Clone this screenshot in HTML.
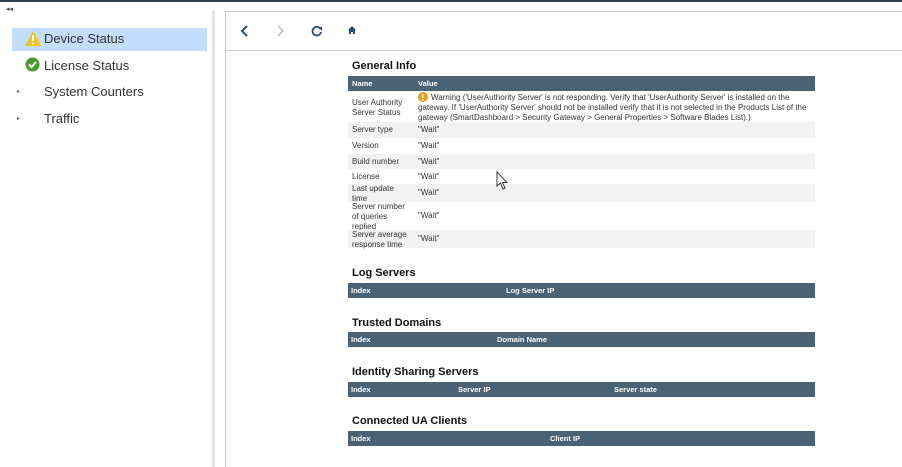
<!DOCTYPE html>
<html><head><style>
*{margin:0;padding:0;box-sizing:border-box}
body{width:902px;height:467px;overflow:hidden;background:#fff;font-family:"Liberation Sans",sans-serif;position:relative}
.a{position:absolute}
.nav{font-size:13px;color:#333}
.h{font-weight:bold;font-size:11px;color:#111}
.bar{background:#4a6274;color:#fff;font-size:7.5px;font-weight:bold;height:15px;left:348px;width:467px;line-height:15px}
.bar span{position:absolute}
.r{left:348px;width:467px;font-size:8px;color:#333}
.g{background:#f2f2f2}
.r .n{position:absolute;left:4px;line-height:10px}
.r .v{position:absolute;left:70px;line-height:10px}
</style></head><body>
<div class="a" style="left:0;top:0;width:902px;height:2px;background:#2c3e50"></div>
<div class="a" style="left:6px;top:5px;font-size:7px;color:#445">◂◂</div>
<div class="a" style="left:212px;top:10px;width:3px;height:457px;background:#e3e3e3"></div>
<div class="a" style="left:12px;top:28px;width:195px;height:23px;background:#c3defb"></div>
<svg class="a" style="left:24px;top:30px" width="18" height="17"><path d="M9 1L17 16H1Z" fill="#f5c21a"/><rect x="8" y="5" width="2" height="6" fill="#fff"/><rect x="8" y="12.5" width="2" height="2" fill="#fff"/></svg>
<div class="a nav" style="left:44px;top:31px">Device Status</div>
<svg class="a" style="left:25px;top:57px" width="15" height="15"><circle cx="7.5" cy="7.5" r="7" fill="#4a9a2e"/><path d="M4 7.5L6.5 10L11 5" stroke="#fff" stroke-width="2" fill="none"/></svg>
<div class="a nav" style="left:44px;top:58px">License Status</div>
<div class="a" style="left:17px;top:88px;font-size:6px;color:#555">▸</div>
<div class="a nav" style="left:44px;top:84px">System Counters</div>
<div class="a" style="left:17px;top:115px;font-size:6px;color:#555">▸</div>
<div class="a nav" style="left:44px;top:111px">Traffic</div>
<div class="a" style="left:225px;top:11px;width:680px;height:40px;border:1px solid #ccc;border-right:none"></div>
<div class="a" style="left:225px;top:11px;width:1px;height:456px;background:#ccc"></div>
<svg class="a" style="left:240px;top:25px" width="10" height="12"><path d="M7 1L2 6L7 11" stroke="#2d4e70" stroke-width="2" fill="none"/></svg>
<svg class="a" style="left:275px;top:25px" width="10" height="12"><path d="M3 1L8 6L3 11" stroke="#bbb" stroke-width="1.5" fill="none"/></svg>
<svg class="a" style="left:311px;top:25px" width="12" height="12"><path d="M9.5 4A4.3 4.3 0 1 0 10 7" stroke="#2d4e70" stroke-width="1.8" fill="none"/><path d="M7 2L11 2L11 6Z" fill="#2d4e70"/></svg>
<svg class="a" style="left:347px;top:25px" width="10" height="10"><path d="M5 1L9 5H8V9H6V7H4V9H2V5H1Z" fill="#2d4e70"/></svg>

<div class="a h" style="left:352px;top:60px">General Info</div>
<div class="a bar" style="top:76px"><span style="left:4px">Name</span><span style="left:70px">Value</span></div>
<div class="a r" style="top:91px;height:31px"><div class="n" style="top:7px">User Authority<br>Server Status</div>
<svg class="a" style="left:70px;top:1px" width="10" height="10"><circle cx="5" cy="5" r="5" fill="#f29b1b"/><rect x="4.2" y="2" width="1.6" height="4" fill="#fff"/><rect x="4.2" y="7" width="1.6" height="1.5" fill="#fff"/></svg>
<div class="v" style="top:2px;width:395px;text-indent:13px">Warning ('UserAuthority Server' is not responding. Verify that 'UserAuthority Server' is installed on the gateway. If 'UserAuthority Server' should not be installed verify that it is not selected in the Products List of the gateway (SmartDashboard &gt; Security Gateway &gt; General Properties &gt; Software Blades List).)</div></div>
<div class="a r g" style="top:122px;height:16px"><div class="n" style="top:3px">Server type</div><div class="v" style="top:3px">"Wait"</div></div>
<div class="a r" style="top:138px;height:16px"><div class="n" style="top:3px">Version</div><div class="v" style="top:3px">"Wait"</div></div>
<div class="a r g" style="top:154px;height:15px"><div class="n" style="top:3px">Build number</div><div class="v" style="top:3px">"Wait"</div></div>
<div class="a r" style="top:169px;height:15px"><div class="n" style="top:3px">License</div><div class="v" style="top:3px">"Wait"</div></div>
<div class="a r g" style="top:184px;height:18px"><div class="n" style="top:0">Last update<br>time</div><div class="v" style="top:4px">"Wait"</div></div>
<div class="a r" style="top:202px;height:28px"><div class="n" style="top:0">Server number<br>of queries<br>replied</div><div class="v" style="top:9px">"Wait"</div></div>
<div class="a r g" style="top:230px;height:18px"><div class="n" style="top:0">Server average<br>response time</div><div class="v" style="top:4px">"Wait"</div></div>

<div class="a h" style="left:352px;top:267px">Log Servers</div>
<div class="a bar" style="top:283px"><span style="left:3px">Index</span><span style="left:158px">Log Server IP</span></div>
<div class="a h" style="left:352px;top:317px">Trusted Domains</div>
<div class="a bar" style="top:332px"><span style="left:3px">Index</span><span style="left:149px">Domain Name</span></div>
<div class="a h" style="left:352px;top:366px">Identity Sharing Servers</div>
<div class="a bar" style="top:382px"><span style="left:3px">Index</span><span style="left:110px">Server IP</span><span style="left:266px">Server state</span></div>
<div class="a h" style="left:352px;top:415px">Connected UA Clients</div>
<div class="a bar" style="top:431px"><span style="left:3px">Index</span><span style="left:202px">Client IP</span></div>
<svg class="a" style="left:496px;top:171px" width="12" height="20"><path d="M1 1L1 15L4.5 12L7 18L9 17L6.5 11.5L11 11.5Z" fill="#fff" stroke="#333"/></svg>
</body></html>
